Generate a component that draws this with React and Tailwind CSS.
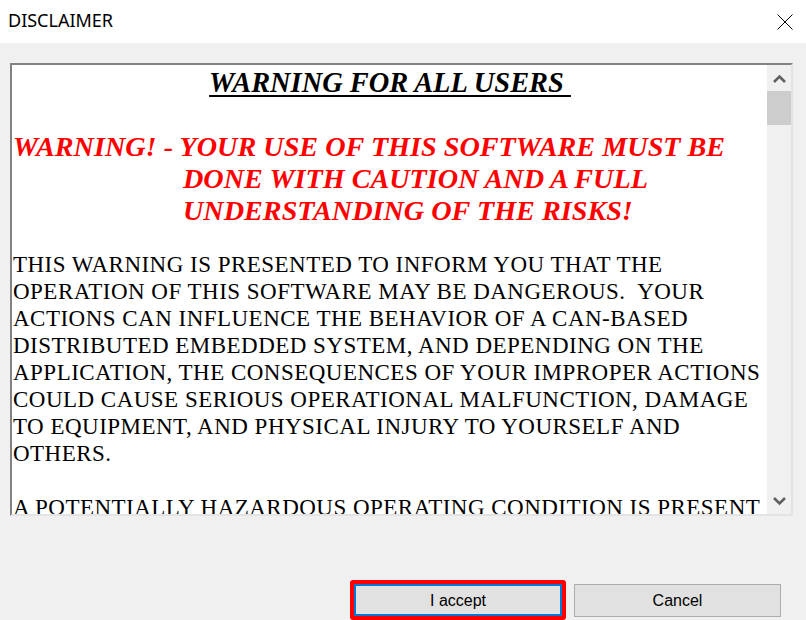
export default function App() {
  const body = [
    'THIS WARNING IS PRESENTED TO INFORM YOU THAT THE',
    'OPERATION OF THIS SOFTWARE MAY BE DANGEROUS.  YOUR',
    'ACTIONS CAN INFLUENCE THE BEHAVIOR OF A CAN-BASED',
    'DISTRIBUTED EMBEDDED SYSTEM, AND DEPENDING ON THE',
    'APPLICATION, THE CONSEQUENCES OF YOUR IMPROPER ACTIONS',
    'COULD CAUSE SERIOUS OPERATIONAL MALFUNCTION, DAMAGE',
    'TO EQUIPMENT, AND PHYSICAL INJURY TO YOURSELF AND',
    'OTHERS.',
    '',
    'A POTENTIALLY HAZARDOUS OPERATING CONDITION IS PRESENT',
  ];

  return (
    <div className="w-[806px] h-[620px] overflow-hidden flex flex-col bg-[#f0f0f0]">
      {/* title bar */}
      <div className="h-[43px] bg-white flex items-center justify-between pl-2 pr-[13px] pb-[2px]">
        <span className="text-[18px] text-black" style={{ fontFamily: '"Noto Sans", sans-serif' }}>DISCLAIMER</span>
        <svg width="16" height="16" viewBox="0 0 16 16" className="mt-[2px]">
          <path d="M0.5 0.5 L15.5 15.5 M15.5 0.5 L0.5 15.5" stroke="#000" strokeWidth="1" fill="none" />
        </svg>
      </div>

      {/* rich text box */}
      <div className="mt-5 ml-[10px] w-[783px] h-[453px] flex border-2 border-t-[#828282] border-l-[#828282] border-b-[#e3e3e3] border-r-[#e3e3e3]">
        <div className="flex-1 bg-white overflow-hidden pt-[2px] pl-[1px]" style={{ fontFamily: '"Liberation Serif", "Times New Roman", serif' }}>
          <div className="text-center leading-[32px] text-[28.4px] font-bold italic text-black">
            <span className="underline underline-offset-[3px] decoration-2 whitespace-pre">WARNING FOR ALL USERS </span>
          </div>
          <div className="h-[32px]" />
          <div className="leading-[32px] text-[28.2px] font-bold italic text-[#ff0000]">
            <div className="whitespace-pre">WARNING! - YOUR USE OF THIS SOFTWARE MUST BE</div>
            <div className="whitespace-pre pl-[170px]">DONE WITH CAUTION AND A FULL</div>
            <div className="whitespace-pre pl-[170px]">UNDERSTANDING OF THE RISKS!</div>
          </div>
          <div className="h-[24px]" />
          <div className="leading-[27px] text-[23px] tracking-[0.48px] text-black">
            {body.map((l, i) => (
              <div key={i} className="whitespace-pre h-[27px]">{l}</div>
            ))}
          </div>
        </div>
        {/* scrollbar */}
        <div className="w-[24px] bg-[#f0f0f0] flex flex-col">
          <div className="h-[26px] flex items-center justify-center">
            <svg width="13" height="9" viewBox="0 0 13 9">
              <path d="M1 8 L6.5 2.5 L12 8" stroke="#606060" strokeWidth="2.6" fill="none" />
            </svg>
          </div>
          <div className="h-[34px] bg-[#cdcdcd]" />
          <div className="flex-1" />
          <div className="h-[26px] flex items-center justify-center">
            <svg width="13" height="9" viewBox="0 0 13 9">
              <path d="M1 1 L6.5 6.5 L12 1" stroke="#606060" strokeWidth="2.6" fill="none" />
            </svg>
          </div>
        </div>
      </div>

      {/* buttons */}
      <div className="mt-[64px] flex items-center justify-end gap-2 pr-[25px]" style={{ fontFamily: '"Liberation Sans", Arial, sans-serif' }}>
        <div className="border-4 border-[#ff0000] rounded-[3px]">
          <button className="w-[208px] h-[32px] pt-[2px] bg-[#e1e1e1] border-2 border-[#0078d7] text-[16px] text-black">I accept</button>
        </div>
        <button className="w-[207px] h-[33px] pt-[2px] bg-[#e1e1e1] border border-[#adadad] text-[16px] text-black">Cancel</button>
      </div>
    </div>
  );
}
